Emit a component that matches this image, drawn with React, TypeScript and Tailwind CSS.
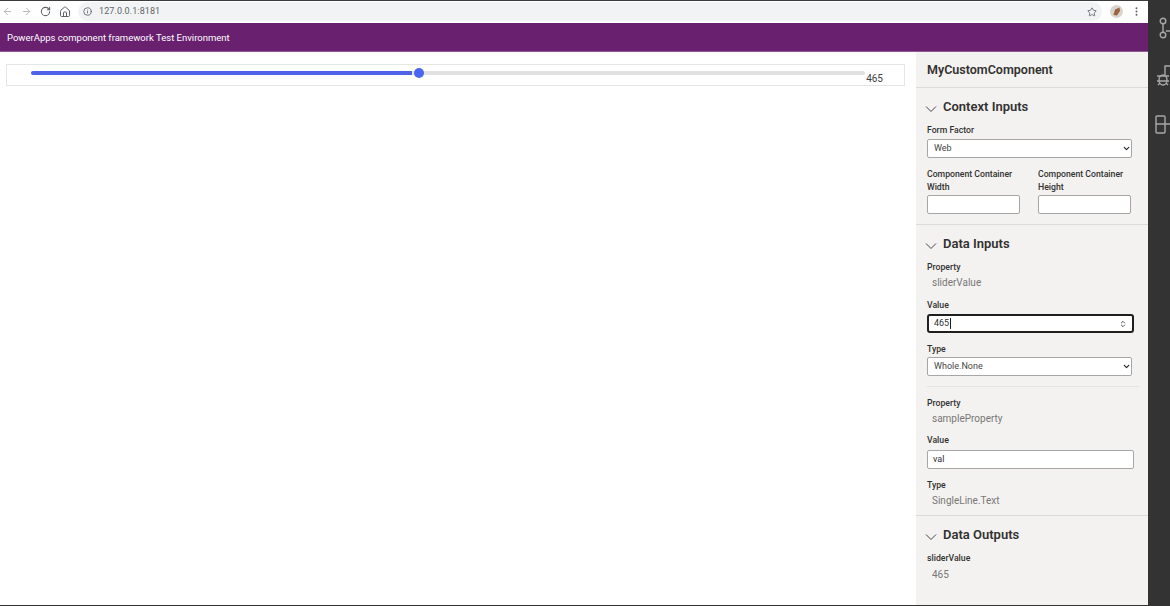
import { ArrowLeft, ArrowRight, RotateCw, Home, Info, Star, EllipsisVertical, ChevronDown, ChevronsUpDown } from 'lucide-react';

function SectionTitle({ title }: { title: string }) {
  return (
    <div className="flex items-center h-[20px] pl-[9px]">
      <svg className="mt-[4px]" width="12" height="8" viewBox="0 0 12 8" fill="none" stroke="#484644" strokeWidth="1">
        <path d="M1 1.5 6 6.5 11 1.5" />
      </svg>
      <span className="ml-[6px] text-[13px] leading-[20px] font-semibold text-[#323130]">{title}</span>
    </div>
  );
}

function FieldLabel({ children }: { children: React.ReactNode }) {
  return <div className="pb-[2px] text-[8.7px] leading-[11px] font-medium text-[#323130]">{children}</div>;
}

// Two-line labels above the container size boxes
function WrappedLabel({ children }: { children: React.ReactNode }) {
  return <div className="text-[8.7px] leading-[13px] font-medium text-[#323130]">{children}</div>;
}

function StaticValue({ children }: { children: React.ReactNode }) {
  return <div className="pl-[5px] text-[10px] leading-[14px] text-[#797775]">{children}</div>;
}

function NativeSelect({ value }: { value: string }) {
  return (
    <div className="relative w-[205px] h-[19px]">
      <select
        defaultValue={value}
        className="block w-full h-full pl-[6px] bg-white border border-[#a6a6a6] rounded-[2px] text-[9px] text-[#484644] appearance-none"
      >
        <option>{value}</option>
      </select>
      <ChevronDown className="absolute right-[1px] top-[5px] w-[9px] h-[9px] text-[#222222] pointer-events-none" strokeWidth={3} />
    </div>
  );
}

function TextBox({ width, value }: { width: string; value?: string }) {
  return (
    <div className={`${width} h-[19px] flex items-center pl-[5px] bg-white border border-[#a6a6a6] rounded-[2px] text-[9px] text-[#323130]`}>
      {value}
    </div>
  );
}

function BrowserBar() {
  return (
    <div className="h-[23px] bg-white flex items-center relative">
      <div className="absolute top-0 left-0 right-0 h-px bg-[#3c3c3c]" />
      <div className="flex items-center pl-[2px] w-[78px] shrink-0">
        <ArrowLeft className="w-[11px] h-[11px] text-[#b5b5b5]" strokeWidth={2} />
        <ArrowRight className="w-[11px] h-[11px] ml-[8px] text-[#b5b5b5]" strokeWidth={2} />
        <RotateCw className="w-[11px] h-[11px] ml-[8px] text-[#5f6368]" strokeWidth={2.25} />
        <Home className="w-[12px] h-[12px] ml-[8px] text-[#5f6368]" strokeWidth={2} />
      </div>
      <div className="flex-1 h-[19px] bg-[#f1f3f4] rounded-full flex items-center pl-[5px] pr-[5px]">
        <Info className="w-[9px] h-[9px] text-[#5f6368]" strokeWidth={2.25} />
        <span className="ml-[7px] text-[9px] tracking-[0.1px] text-[#5f6368]">127.0.0.1:8181</span>
        <Star className="w-[10px] h-[10px] ml-auto text-[#5f6368]" strokeWidth={2} />
      </div>
      <div className="w-[46px] shrink-0 flex items-center pl-[8px]">
        <svg width="13" height="13" viewBox="0 0 13 13">
          <circle cx="6.5" cy="6.5" r="6.5" fill="#d9d4cf" />
          <path d="M3.5 10 5 4.5 9.5 2.5 10 6 7 10.5Z" fill="#9a6440" />
        </svg>
        <EllipsisVertical className="w-[11px] h-[11px] ml-[8px] text-[#5f6368]" strokeWidth={2.25} />
      </div>
    </div>
  );
}

function SliderControl() {
  return (
    <div className="h-[22px] border border-[#e6e6e6] pl-[24px] pr-[21px] flex">
      <div className="flex-1 relative">
        <div className="absolute left-0 right-[18px] top-[6px] h-[4px] rounded-full bg-[#e1e1e1]" />
        <div className="absolute left-0 w-[381px] top-[6px] h-[4px] rounded-l-full bg-[#4f63e8]" />
        <div className="absolute left-[383px] top-[3px] w-[10px] h-[10px] rounded-full bg-[#4a66f0]" />
        <span className="absolute right-0 top-[7px] text-[10px] leading-[14px] text-[#404040]">465</span>
      </div>
    </div>
  );
}

function SidePanel() {
  return (
    <aside className="w-[232px] shrink-0 bg-[#f3f2f1] text-[#323130]">
      <div className="h-[36px] flex items-center pl-[11px] pt-[2px] border-b border-[#dcdbd9] text-[12.5px] font-semibold">
        MyCustomComponent
      </div>

      <section className="h-[137px] pt-[9px] border-b border-[#dcdbd9]">
        <SectionTitle title="Context Inputs" />
        <div className="pl-[11px]">
          <div className="mt-[8px] mb-[1px]">
            <FieldLabel>Form Factor</FieldLabel>
          </div>
          <NativeSelect value="Web" />
          <div className="flex gap-[18px] mt-[10px]">
            <div className="w-[93px]">
              <WrappedLabel>Component Container Width</WrappedLabel>
              <div className="mt-[1px]"><TextBox width="w-[93px]" /></div>
            </div>
            <div className="w-[93px]">
              <WrappedLabel>Component Container Height</WrappedLabel>
              <div className="mt-[1px]"><TextBox width="w-[93px]" /></div>
            </div>
          </div>
        </div>
      </section>

      <section className="h-[291px] pt-[9px] border-b border-[#dcdbd9]">
        <SectionTitle title="Data Inputs" />
        <div className="pl-[11px] pr-[9px]">
          <div className="mt-[8px]"><FieldLabel>Property</FieldLabel></div>
          <div className="mt-[1px]"><StaticValue>sliderValue</StaticValue></div>
          <div className="mt-[10px] mb-[1px]"><FieldLabel>Value</FieldLabel></div>
          <div className="w-[207px] h-[19px] flex items-center pl-[5px] pr-[5px] bg-white border-2 border-[#1f1f1f] rounded-[3px] text-[9px]">
            465
            <span className="w-px h-[11px] bg-[#1f1f1f] ml-[1px]" />
            <ChevronsUpDown className="w-[8px] h-[8px] ml-auto text-[#323130]" strokeWidth={2.5} />
          </div>
          <div className="mt-[11px]"><FieldLabel>Type</FieldLabel></div>
          <NativeSelect value="Whole.None" />
          <div className="h-px bg-[#e4e3e1] mt-[10px] mb-[11px] w-[212px]" />
          <FieldLabel>Property</FieldLabel>
          <div className="mt-[1px]"><StaticValue>sampleProperty</StaticValue></div>
          <div className="mt-[9px] mb-[2px]"><FieldLabel>Value</FieldLabel></div>
          <TextBox width="w-[207px]" value="val" />
          <div className="mt-[11px]"><FieldLabel>Type</FieldLabel></div>
          <div className="mt-[1px]"><StaticValue>SingleLine.Text</StaticValue></div>
        </div>
      </section>

      <section className="pt-[9px]">
        <SectionTitle title="Data Outputs" />
        <div className="pl-[11px]">
          <div className="mt-[8px]"><FieldLabel>sliderValue</FieldLabel></div>
          <div className="mt-[2px]"><StaticValue>465</StaticValue></div>
        </div>
      </section>
    </aside>
  );
}

function EditorStrip() {
  return (
    <div className="w-[22px] shrink-0 bg-[#333333] overflow-hidden flex flex-col items-start pt-[17px] pl-[11px]">
      <svg className="shrink-0" width="22" height="24" viewBox="0 0 22 24" fill="none" stroke="#a8a8a8" strokeWidth="1.4">
        <circle cx="4" cy="4" r="2.8" />
        <circle cx="4" cy="18" r="2.8" />
        <path d="M4 7v8M6.8 14H14" />
      </svg>
      <svg className="shrink-0 mt-[24px] -ml-[2px]" width="22" height="24" viewBox="0 0 22 24" fill="none" stroke="#a8a8a8" strokeWidth="1.4">
        <ellipse cx="6" cy="15" rx="4" ry="5" />
        <path d="M0 11h12M0 16h12M1 20l2-2M11 20l-2-2M8 10V1h6v3" />
      </svg>
      <svg className="shrink-0 mt-[26px] -ml-[4px]" width="22" height="20" viewBox="0 0 22 20" fill="none" stroke="#a8a8a8" strokeWidth="1.4">
        <path d="M1 9V2a1 1 0 0 1 1-1h7a1 1 0 0 1 1 1v15a1 1 0 0 1-1 1H2a1 1 0 0 1-1-1V9h16" />
      </svg>
    </div>
  );
}

export default function App() {
  return (
    <div className="w-[1170px] h-[606px] flex overflow-hidden bg-white font-['Roboto','Noto_Sans',sans-serif]">
      <div className="flex-1 flex flex-col min-w-0 border-b border-[#333333]">
        <BrowserBar />
        <header className="h-[29px] shrink-0 flex items-center pl-[7px] pt-[2px] bg-[#68206f] border-b border-[#8e5a92] text-[9.5px] text-white">
          PowerApps component framework Test Environment
        </header>
        <div className="flex-1 flex min-h-0">
          <main className="flex-1 min-w-0 pt-[12px] pl-[6px] pr-[11px]">
            <SliderControl />
          </main>
          <SidePanel />
        </div>
      </div>
      <EditorStrip />
    </div>
  );
}
